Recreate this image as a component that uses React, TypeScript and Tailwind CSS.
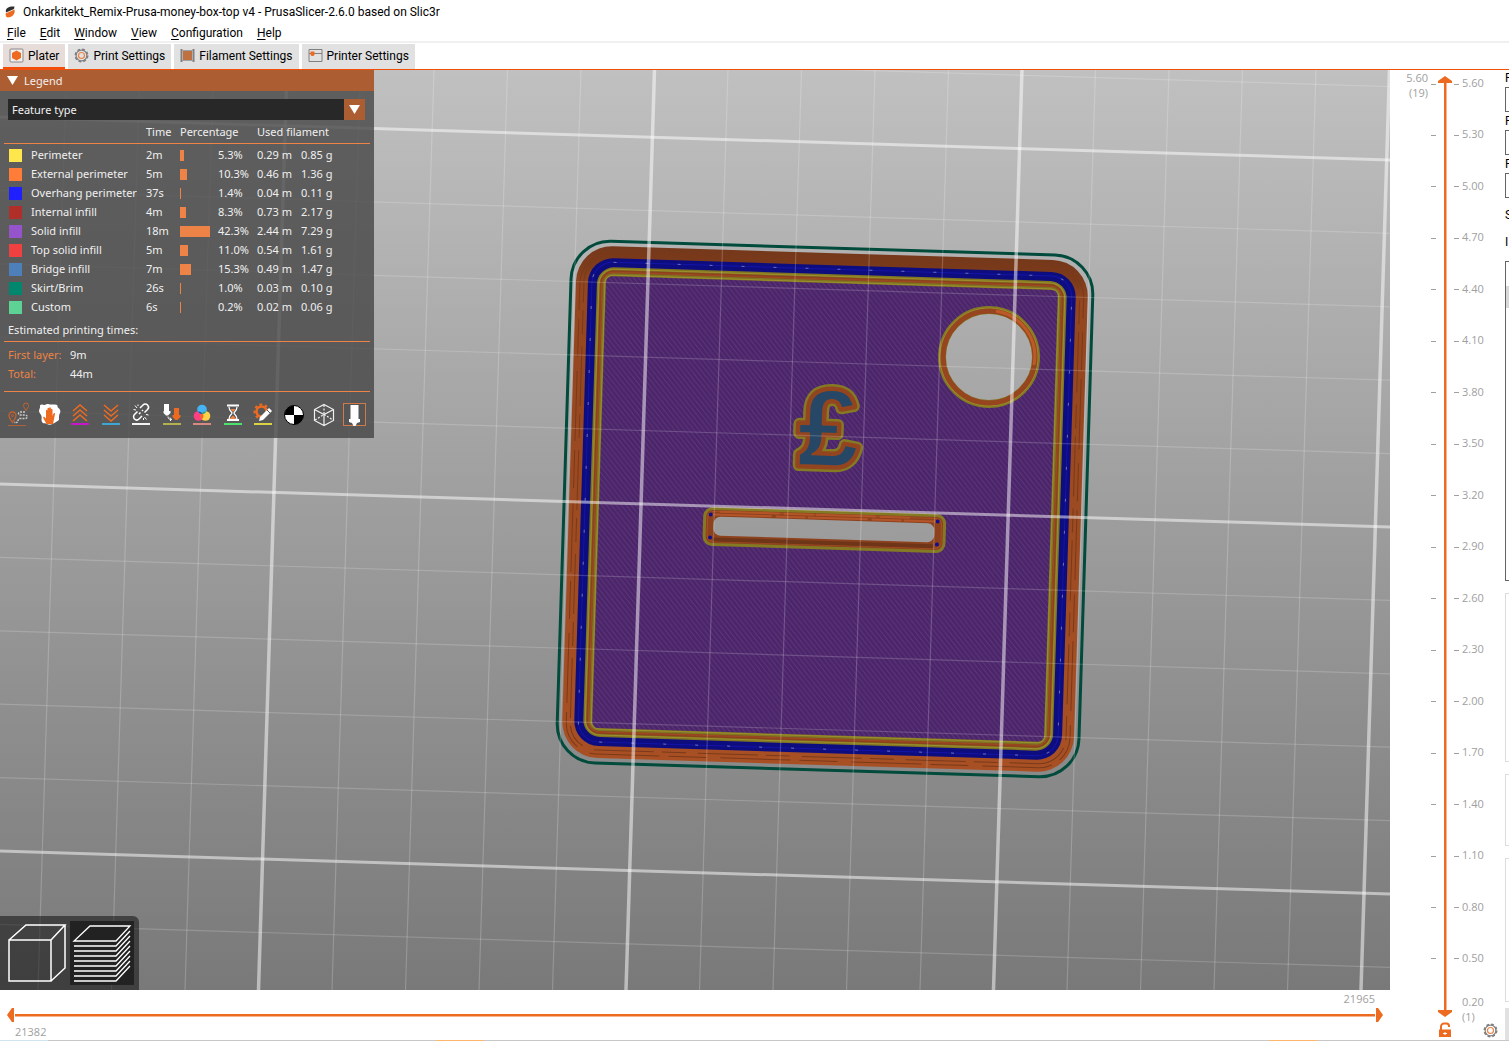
import type { ReactNode } from "react";
import clsx from "clsx";

const MENUS = ["File", "Edit", "Window", "View", "Configuration", "Help"];

const FEATURES = [
  { name: "Perimeter", swatch: "bg-[#ffe64d]", time: "2m", bar: 4, percent: "5.3%", length: "0.29 m", weight: "0.85 g" },
  { name: "External perimeter", swatch: "bg-[#ff7d38]", time: "5m", bar: 7, percent: "10.3%", length: "0.46 m", weight: "1.36 g" },
  { name: "Overhang perimeter", swatch: "bg-[#1f1fff]", time: "37s", bar: 1, percent: "1.4%", length: "0.04 m", weight: "0.11 g" },
  { name: "Internal infill", swatch: "bg-[#b03029]", time: "4m", bar: 6, percent: "8.3%", length: "0.73 m", weight: "2.17 g" },
  { name: "Solid infill", swatch: "bg-[#9654cc]", time: "18m", bar: 30, percent: "42.3%", length: "2.44 m", weight: "7.29 g" },
  { name: "Top solid infill", swatch: "bg-[#f04040]", time: "5m", bar: 8, percent: "11.0%", length: "0.54 m", weight: "1.61 g" },
  { name: "Bridge infill", swatch: "bg-[#4d80ba]", time: "7m", bar: 11, percent: "15.3%", length: "0.49 m", weight: "1.47 g" },
  { name: "Skirt/Brim", swatch: "bg-[#00876e]", time: "26s", bar: 1, percent: "1.0%", length: "0.03 m", weight: "0.10 g" },
  { name: "Custom", swatch: "bg-[#5ed194]", time: "6s", bar: 1, percent: "0.2%", length: "0.02 m", weight: "0.06 g" },
];

const HEIGHTS = [
  "5.60", "5.30", "5.00", "4.70", "4.40", "4.10", "3.80", "3.50", "3.20",
  "2.90", "2.60", "2.30", "2.00", "1.70", "1.40", "1.10", "0.80", "0.50",
];

export default function App() {
  return (
    <div className="flex h-screen flex-col overflow-hidden bg-white font-[Roboto,sans-serif] text-xs text-black">
      <TitleBar />
      <MenuBar />
      <Tabs />
      <div className="flex min-h-0 flex-1">
        <main className="flex min-w-0 flex-1 flex-col">
          <Viewport />
          <MoveSlider />
        </main>
        <LayerSlider />
        <Sidebar />
      </div>
      <div className="flex h-px shrink-0 bg-[#c8c8c8]">
        <div className="w-12 bg-[#cfe6f2]" />
        <div className="ml-[388px] w-12 bg-[#ffb56b]" />
        <div className="mr-48 ml-auto w-12 bg-[#ffb56b]" />
      </div>
    </div>
  );
}

function TitleBar() {
  return (
    <header className="flex h-[23px] shrink-0 items-center gap-[7px] pl-1">
      <svg viewBox="0 0 12 14" className="h-[14px] w-3">
        <path d="M2 7.500C1 3.500 4 1 10.500 1.500L10 4Z" fill="#2e2e2e" />
        <path d="M1.500 8.500 10.500 4.500C11.500 8 9 12.500 3.500 12.500L2 11.500Z" fill="#ed6b21" />
      </svg>
      <h1 className="whitespace-nowrap">
        Onkarkitekt_Remix-Prusa-money-box-top v4 - PrusaSlicer-2.6.0 based on Slic3r
      </h1>
    </header>
  );
}

function MenuBar() {
  return (
    <nav className="flex h-5 shrink-0 items-center gap-[14px] border-b-2 border-[#f0f0f0] pt-[2px] pl-[7px]">
      {MENUS.map((menu) => (
        <button key={menu} type="button" className="leading-4">
          <span className="underline underline-offset-2">{menu[0]}</span>
          {menu.slice(1)}
        </button>
      ))}
    </nav>
  );
}

function Tabs() {
  return (
    <div className="flex h-[27px] shrink-0 items-end gap-[3px] border-b border-[#f2500a] pl-[3px]" role="tablist">
      <Tab label="Plater" isActive>
        <rect x="1" y="1" width="13" height="13" rx="1" fill="#f3efec" stroke="#8a8a8a" />
        <path d="m7.500 2.500 4.500 2.500v5l-4.500 2.500-4.500-2.500v-5Z" fill="#ed6b21" />
      </Tab>
      <Tab label="Print Settings">
        <GearShape />
      </Tab>
      <Tab label="Filament Settings">
        <path d="M3 3h9v9H3z" fill="#c07142" />
        <path d="M1.500 1v13M13.500 1v13" stroke="#808080" strokeWidth="2" />
        <path d="M2 2.500h11M2 12.500h11" stroke="#a0a0a0" />
      </Tab>
      <Tab label="Printer Settings">
        <path d="M1 1.500h13v12H1zM1 5.500h13" fill="none" stroke="#808080" />
        <path d="M2.500 3.500h4v3l-1 1.500h-2l-1-1.500Z" fill="#ed6b21" />
      </Tab>
    </div>
  );
}

function Tab({
  label,
  children,
  isActive = false,
}: {
  label: string;
  children: ReactNode;
  isActive?: boolean;
}) {
  return (
    <button
      type="button"
      role="tab"
      aria-selected={isActive}
      className={clsx(
        "flex h-[25px] items-center gap-1 px-[6px] whitespace-nowrap",
        isActive ? "border-b-2 border-[#f2500a] bg-[#e6dcd9]" : "bg-[#e1e1e1] pb-[2px]",
      )}
    >
      <svg viewBox="0 0 15 15" className="size-[15px]">
        {children}
      </svg>
      {label}
    </button>
  );
}

function GearShape() {
  return (
    <g fill="none">
      <circle cx="7.500" cy="7.500" r="6" stroke="#808080" strokeWidth="2" strokeDasharray="2.700 2" />
      <circle cx="7.500" cy="7.500" r="5.400" stroke="#808080" strokeWidth="1.200" />
      <circle cx="7.500" cy="7.500" r="3" stroke="#ed8346" strokeWidth="1.200" />
    </g>
  );
}

function Viewport() {
  return (
    <section className="relative min-h-0 flex-1 overflow-hidden bg-[#999999]">
      <Scene />
      <Legend />
      <ViewToolbar />
    </section>
  );
}

function Scene() {
  const lines = Array.from({ length: 24 }, (_, i) => i - 4);

  return (
    <svg
      viewBox="0 70 1390 920"
      preserveAspectRatio="xMidYMid slice"
      className="absolute inset-0 h-full w-full"
    >
      <defs>
        <linearGradient id="bed" gradientUnits="userSpaceOnUse" x1="0" y1="70" x2="0" y2="990">
          <stop offset="0" stopColor="#c0c0c0" />
          <stop offset="1" stopColor="#797979" />
        </linearGradient>
        <linearGradient id="wall" gradientUnits="userSpaceOnUse" x1="0" y1="253" x2="0" y2="765">
          <stop offset="0" stopColor="#75381a" />
          <stop offset="0.040" stopColor="#7d3c1c" />
          <stop offset="0.080" stopColor="#93461f" />
          <stop offset="1" stopColor="#a85024" />
        </linearGradient>
        <pattern id="infill" width="5" height="6" patternUnits="userSpaceOnUse">
          <path d="M0 0h5v6H0z" fill="#4b2667" />
          <path d="m-1-1.200 7 8.400M-1 4.800l2 2.400M4-1.200l2 2.400" stroke="#62378a" strokeWidth="1" />
        </pattern>
      </defs>
      <rect y="70" width="1390" height="920" fill="url(#bed)" />

      <g transform="rotate(1.780 825 509)">
        <rect x="564" y="248" width="522" height="522" rx="39" fill="none" stroke="#004b3b" strokeWidth="3" />
        <path
          d="M605 253h440a36 36 0 0 1 36 36v440a36 36 0 0 1-36 36H605a36 36 0 0 1-36-36V289a36 36 0 0 1 36-36Z"
          fill="url(#wall)"
        />
        <g fill="none" stroke="#7a3a1a">
          <rect x="573" y="260" width="504" height="501" rx="31" strokeDasharray="38 9 70 14" />
          <rect x="577" y="262" width="496" height="495" rx="27" strokeDasharray="60 12 24 8" />
        </g>
        <rect x="581" y="265" width="488" height="488" rx="25" fill="#0d0d80" />
        <rect x="585" y="269" width="480" height="480" rx="21" fill="none" stroke="#1515a8" />
        <rect x="585" y="269" width="480" height="480" rx="21" fill="none" stroke="#7070a8" strokeDasharray="3 29" />
        <rect x="590" y="274" width="470" height="470" rx="17" fill="#807522" />
        <rect x="592" y="276" width="466" height="466" rx="15" fill="none" stroke="#9c902c" />
        <rect x="593" y="277" width="464" height="464" rx="14" fill="#8d421e" />
        <rect x="595" y="279" width="460" height="460" rx="12" fill="none" stroke="#a04b23" />
        <rect x="596" y="280" width="458" height="458" rx="10" fill="#807522" />
        <rect x="598" y="282" width="454" height="454" rx="8" fill="none" stroke="#9c902c" />
        <rect x="599" y="283" width="452" height="452" rx="6" fill="url(#infill)" />

        <rect x="705" y="512" width="240" height="36" rx="8" fill="#8d421e" stroke="#857a24" strokeWidth="3" />
        <rect x="708" y="515" width="234" height="30" rx="6" fill="none" stroke="#a64f24" />
        <path d="M712 518h224M720 515h190" stroke="#b35528" strokeWidth="2" strokeDasharray="60 4 30 2" />
        <path d="M714 543h220" stroke="#6f3519" strokeWidth="4" />
        <g fill="#10108a">
          <circle cx="711" cy="518" r="2" />
          <circle cx="711" cy="541" r="2" />
          <circle cx="938" cy="518" r="2" />
          <circle cx="938" cy="541" r="2" />
        </g>
        <rect x="714" y="520" width="221" height="19" rx="7" fill="url(#bed)" />

        <g
          fontFamily="Liberation Sans"
          fontSize="109"
          fontWeight="700"
          textAnchor="middle"
          strokeLinejoin="round"
        >
          <text x="826" y="466" fill="#857a24" stroke="#857a24" strokeWidth="12" aria-hidden="true">£</text>
          <text x="826" y="466" fill="#93451f" stroke="#93451f" strokeWidth="7" aria-hidden="true">£</text>
          <text x="826" y="466" fill="#274766" stroke="#93451f" strokeWidth="2">£</text>
        </g>
      </g>

      <circle cx="989" cy="357" r="47" fill="url(#bed)" stroke="#857a24" strokeWidth="8" />
      <circle cx="989" cy="357" r="49" fill="none" stroke="#9c902c" />
      <circle cx="989" cy="357" r="46" fill="none" stroke="#96451f" strokeWidth="5" />
      <path d="M996 311a46 46 0 0 1 38 54" fill="none" stroke="#bc5a2a" strokeWidth="3" />

      <g stroke="#ffffff">
        {lines.map((i) => (
          <line
            key={`v${i}`}
            x1={287 + i * 73.5}
            y1="70"
            x2={258.5 + i * 73.5}
            y2="990"
            strokeOpacity={i % 5 === 0 ? 0.5 : 0.2}
            strokeWidth={i % 5 === 0 ? 3.5 : 1.2}
          />
        ))}
        {lines.map((i) => (
          <line
            key={`h${i}`}
            x1="0"
            y1={117 + i * 73.4}
            x2="1390"
            y2={160 + i * 73.4}
            strokeOpacity={i % 5 === 0 ? 0.5 : 0.18}
            strokeWidth={i % 5 === 0 ? 3 : 1.2}
          />
        ))}
      </g>
    </svg>
  );
}

function Legend() {
  return (
    <div className="absolute top-0 left-0 w-[374px] bg-[#414141]/77 pb-2 font-['Noto_Sans',sans-serif] text-[11px] leading-4 text-[#f0f0f0]">
      <div className="flex h-[21px] items-center gap-[6px] bg-[#ad5d32] pl-[7px]">
        <TriangleDown />
        <h2>Legend</h2>
      </div>
      <div className="mt-2 mr-[9px] ml-2 grid h-[21px] grid-cols-[1fr_21px]">
        <select
          aria-label="Color by"
          className="col-span-2 col-start-1 row-start-1 appearance-none bg-[#282828] px-1 outline-none"
        >
          <option>Feature type</option>
        </select>
        <span className="pointer-events-none col-start-2 row-start-1 flex items-center justify-center bg-[#ad5d32]">
          <TriangleDown />
        </span>
      </div>
      <table className="mx-1 w-[366px] table-fixed border-collapse text-left">
        <colgroup>
          <col className="w-[27px]" />
          <col className="w-[115px]" />
          <col className="w-[34px]" />
          <col className="w-[38px]" />
          <col className="w-[39px]" />
          <col className="w-11" />
          <col />
        </colgroup>
        <thead>
          <tr className="h-[23px] border-b border-[#ed8346]">
            <th colSpan={2} aria-label="Feature" />
            <th className="pt-px font-normal">Time</th>
            <th colSpan={2} className="pt-px font-normal">Percentage</th>
            <th colSpan={2} className="pt-px font-normal">Used filament</th>
          </tr>
        </thead>
        <tbody className="whitespace-nowrap before:block before:h-[2px]">
          {FEATURES.map((feature) => (
            <tr key={feature.name} className="h-[19px]">
              <td className="pl-[5px]">
                <div className={clsx("size-[13px]", feature.swatch)} />
              </td>
              <td>{feature.name}</td>
              <td>{feature.time}</td>
              <td>
                <div className="h-[11px] bg-[#ed8346]" style={{ width: feature.bar }} />
              </td>
              <td>{feature.percent}</td>
              <td>{feature.length}</td>
              <td>{feature.weight}</td>
            </tr>
          ))}
        </tbody>
      </table>
      <p className="mx-1 mt-[5px] border-b border-[#ed8346] pb-[3px] pl-1">Estimated printing times:</p>
      <dl className="mx-1 grid grid-cols-[62px_1fr] gap-y-[3px] border-b border-[#ed8346] pt-[5px] pb-[9px] pl-1">
        <dt className="text-[#ed8346]">First layer:</dt>
        <dd>9m</dd>
        <dt className="text-[#ed8346]">Total:</dt>
        <dd>44m</dd>
      </dl>
      <LegendTools />
    </div>
  );
}

function TriangleDown() {
  return (
    <svg viewBox="0 0 11 9" className="h-[9px] w-[11px]">
      <path d="M0 0h11L5.500 9Z" fill="#ffffff" />
    </svg>
  );
}

function LegendTools() {
  return (
    <div className="mx-1 mt-2 flex justify-between">
      <Tool label="Travel">
        <g fill="none" stroke="#c4622f">
          <path d="M8.500 22.500C6.500 19 5 18 5 15.500a3.500 3.500 0 0 1 7 0c0 2.500-1.500 3.500-3.500 7Z" strokeWidth="1.300" />
          <circle cx="8.500" cy="15.500" r="1" />
          <path d="M22 10.500c-1.500-2.500-2.500-3.500-2.500-5a2.500 2.500 0 0 1 5 0c0 1.500-1 2.500-2.500 5Z" />
          <path d="M4 25.500h18" strokeWidth="0.800" />
        </g>
        <path
          d="M21 12h-5c-2 0-2 3 0 3h5c3 0 3 3.500 0 3.500h-5c-3 0-1 4-4 4h-2"
          fill="none"
          stroke="#c9c9c9"
          strokeWidth="1.500"
          strokeDasharray="2 1"
        />
      </Tool>
      <Tool label="Wipe">
        <path d="M5 5.500c1-1.500 3-1 4-.5s2-1.500 4-1 2 .5 4 .5 4-.5 5 .5 0 2 1.500 3S26 11 25 13s-1 3-1 5 0 2-1.500 3-3 2-5 3-4 1-5.500 0S8 24 7 22s0-4-.5-6S4 13 4 11s1.500-3 1-5.500Z" fill="#ffffff" />
        <path
          d="M11.500 24 8 17.500l1-1 2 2V10.500c0-1 1.500-1 1.500 0V15V8.500c0-1 1.700-1 1.700 0V15V8c0-1 1.700-1 1.700 0v7V9.500c0-1 1.600-1 1.600 0V16l1-2.500c.5-1 1.800-.5 1.500.5l-2 10Z"
          fill="#ed6b21"
        />
      </Tool>
      <Tool label="Retractions" line="#c817c8">
        <path d="m8 11 7-6 7 6M8 16l7-6 7 6M8 21l7-6 7 6" fill="none" stroke="#ed6b21" strokeWidth="1.500" />
      </Tool>
      <Tool label="Deretractions" line="#3ea6d0">
        <path d="m8 5 7 6 7-6M8 10l7 6 7-6M8 15l7 6 7-6" fill="none" stroke="#ed6b21" strokeWidth="1.500" />
      </Tool>
      <Tool label="Seams" line="#f2f2f2">
        <g fill="none" stroke="#ffffff" strokeWidth="1.500">
          <path d="m14 8 3-3a3 3 0 0 1 4.500 4.500l-3 3M16 16l-3 3a3 3 0 0 1-4.500-4.500l3-3M13 14l1.500-1.500M16 11l1-1" />
          <path d="M9 5.500 11 8M7.500 9.500l2.500.5M20 14.500l2.500.5M18.500 17l2 2.500M12 4.500V6M17.500 18v2" strokeWidth="1" />
        </g>
      </Tool>
      <Tool label="Tool changes" line="#b5b04f">
        <path d="M7 4h5v7h1.500v2L11 15.500H9L6.500 13v-2H7Z" fill="#ffffff" />
        <path d="M17 8h5v7h1.500v2L20.500 20h-2L15.500 17v-2H17Z" fill="#ed6b21" />
        <path d="M11 16.500c0 2 1 3 3.500 3l-1.500-2m1.500 2-1.500 1.500" fill="none" stroke="#ffffff" />
      </Tool>
      <Tool label="Color changes" line="#d98a80">
        <circle cx="11.500" cy="16" r="4.800" fill="#ff3f80" />
        <circle cx="18.500" cy="16" r="4.800" fill="#ffcf48" />
        <circle cx="15" cy="9.500" r="4.800" fill="#45b4f5" />
        <path d="M15 12.700a4.800 4.800 0 0 1 0 6.600 4.800 4.800 0 0 1 0-6.600Z" fill="#ed6b21" />
        <path d="M11 11.500a4.800 4.800 0 0 1 4 1.500l-.5 1A4.800 4.800 0 0 1 11 11.500Z" fill="#343c8c" />
        <path d="M19 11.500a4.800 4.800 0 0 0-4 1.500l.5 1A4.800 4.800 0 0 0 19 11.500Z" fill="#3c9c50" />
      </Tool>
      <Tool label="Print pauses" line="#4be36e">
        <path d="M9 5.500h12M9 20h12" stroke="#ffffff" strokeWidth="2" />
        <path d="M11 7c0 4 3 4.500 3 6s-3 2-3 6h8c0-4-3-4.500-3-6s3-2 3-6" fill="none" stroke="#ffffff" strokeWidth="1.200" />
        <path d="M12.500 9h5L15 12ZM12 19c.5-2 2-2.500 3-3.500 1 1 2.500 1.500 3 3.500Z" fill="#ed8346" />
      </Tool>
      <Tool label="Custom G-codes" line="#d9d443">
        <circle cx="13.500" cy="11.500" r="5" fill="none" stroke="#ed6b21" strokeWidth="2.600" strokeDasharray="24 8" transform="rotate(90 13.500 11.500)" />
        <circle cx="13.500" cy="11.500" r="7" fill="none" stroke="#ed6b21" strokeWidth="2" strokeDasharray="2.700 2.700 2.700 2.700 2.700 2.700 2.700 2.700 2.700 20" transform="rotate(120 13.500 11.500)" />
        <path d="m11 21 1-4 9-9 3 3-9 9Z" fill="#ffffff" />
        <path d="m19 10 3 3" stroke="#555555" />
      </Tool>
      <Tool label="Center of gravity">
        <circle cx="15" cy="15" r="9.500" fill="#ffffff" />
        <path d="M15 15V5.500A9.500 9.500 0 0 0 5.500 15ZM15 15v9.500a9.500 9.500 0 0 0 9.500-9.500Z" fill="#000000" />
        <circle cx="15" cy="15" r="9.500" fill="none" stroke="#000000" />
      </Tool>
      <Tool label="Shells">
        <g fill="none" stroke="#f0f0f0" strokeWidth="1.200">
          <path d="m15 4.500 9.500 5v11L15 25.500l-9.500-5v-11ZM5.500 9.500l9.500 5 9.500-5M15 14.500v11" />
          <path d="M15 5v9M6 20l9-5.500 9 5.500" strokeDasharray="2 1.500" />
        </g>
      </Tool>
      <Tool label="Tool marker" isActive>
        <path d="M10.500 5h8v14H20v3l-3 1-1.500 3h-2L12 23l-3-1v-3h1.500Z" fill="#ffffff" />
      </Tool>
    </div>
  );
}

function Tool({
  label,
  line,
  children,
  isActive = false,
}: {
  label: string;
  line?: string;
  children: ReactNode;
  isActive?: boolean;
}) {
  return (
    <button type="button" aria-label={label} aria-pressed={isActive}>
      <svg viewBox="0 0 30 30" className="size-[30px]">
        {isActive && <rect x="3.500" y="3.500" width="22" height="22" fill="#555555" stroke="#d07a48" />}
        {children}
        {line && <path d="M6 24h18" stroke={line} strokeWidth="2" />}
      </svg>
    </button>
  );
}

function ViewToolbar() {
  return (
    <div className="absolute bottom-0 left-0 flex gap-[2px] rounded-tr-md bg-black/48 py-[5px] pr-[5px] pl-1">
      <button type="button" aria-label="3D editor view" className="size-16">
        <svg viewBox="0 0 64 64" className="size-16" fill="none" stroke="#ffffff" strokeWidth="1.500">
          <path d="M5 19h42v41H5ZM5 19 22 4h39L47 19M61 4v43L47 60" />
        </svg>
      </button>
      <button type="button" aria-label="Preview" aria-pressed="true" className="size-16 bg-[#222222]">
        <svg viewBox="0 0 64 64" className="size-16" fill="none" stroke="#ffffff" strokeWidth="1.300">
          <path d="M4 20h42L60 5H20Z" />
          {Array.from({ length: 8 }, (_, i) => (
            <path key={i} d={`M4 ${25 + i * 5}h42l14-15`} />
          ))}
        </svg>
      </button>
    </div>
  );
}

const THUMB =
  "pointer-events-none appearance-none bg-transparent outline-none [&::-webkit-slider-thumb]:pointer-events-auto [&::-webkit-slider-thumb]:appearance-none [&::-webkit-slider-thumb]:bg-[#ed6b21]";

const H_THUMB =
  "col-start-1 row-start-1 h-[14px] w-full [&::-webkit-slider-thumb]:h-[14px] [&::-webkit-slider-thumb]:w-[7px]";

const V_THUMB =
  "col-start-1 row-start-1 h-full w-[14px] justify-self-center [direction:rtl] [writing-mode:vertical-lr] [&::-webkit-slider-thumb]:h-[7px] [&::-webkit-slider-thumb]:w-[14px]";

function MoveSlider() {
  return (
    <div className="flex h-[50px] shrink-0 flex-col px-[7px] font-['Open_Sans',sans-serif] text-[11px] leading-[17px] text-[#a0a0a0]">
      <output className="self-end pr-2">21965</output>
      <div className="grid h-4 items-center">
        <div className="col-start-1 row-start-1 mx-2 h-[3px] border-b border-[#f9b48f] bg-[#ed6b21]" />
        <input
          type="range"
          aria-label="First move"
          min={21382}
          max={21965}
          defaultValue={21382}
          className={clsx(THUMB, H_THUMB, "[&::-webkit-slider-thumb]:[clip-path:polygon(0_50%,70%_0,100%_0,100%_100%,70%_100%)]")}
        />
        <input
          type="range"
          aria-label="Last move"
          min={21382}
          max={21965}
          defaultValue={21965}
          className={clsx(THUMB, H_THUMB, "[&::-webkit-slider-thumb]:[clip-path:polygon(100%_50%,30%_0,0_0,0_100%,30%_100%)]")}
        />
      </div>
      <output className="pl-2">21382</output>
    </div>
  );
}

function LayerSlider() {
  return (
    <div className="flex w-[115px] shrink-0 flex-col font-['Open_Sans',sans-serif] text-[11px] leading-4 text-[#a0a0a0]">
      <div className="grid min-h-0 flex-1 grid-cols-[38px_28px_1fr]">
        <output className="text-right leading-[15px]">
          5.60
          <br />
          (19)
        </output>
        <div className="col-start-2 row-start-1 ml-[3px] grid w-7 pt-[6px] pb-[3px]">
          <div className="col-start-1 row-start-1 my-[6px] w-[3px] justify-self-center border-r border-[#f9b48f] bg-[#ed6b21]" />
          <input
            type="range"
            aria-label="Top layer"
            min={1}
            max={19}
            defaultValue={19}
            className={clsx(THUMB, V_THUMB, "[&::-webkit-slider-thumb]:[clip-path:polygon(50%_0,100%_70%,100%_100%,0_100%,0_70%)]")}
          />
          <input
            type="range"
            aria-label="Bottom layer"
            min={1}
            max={19}
            defaultValue={1}
            className={clsx(THUMB, V_THUMB, "[&::-webkit-slider-thumb]:[clip-path:polygon(50%_100%,100%_30%,100%_0,0_0,0_30%)]")}
          />
        </div>
        <div className="col-span-2 col-start-2 row-start-1 -mb-1 flex flex-col justify-between pt-[5px] pl-[3px]">
          <div className="flex flex-1 flex-col justify-between">
            {HEIGHTS.map((height) => (
              <div key={height} className="flex h-4 items-center">
                <span className="mt-[2px] mr-[18px] h-px w-[5px] bg-[#a0a0a0]" />
                <span className="mt-[2px] mr-[3px] h-px w-[5px] bg-[#a0a0a0]" />
                {height}
              </div>
            ))}
          </div>
          <output className="mt-7 pl-[31px] leading-[15px]">
            0.20
            <br />
            (1)
          </output>
        </div>
      </div>
      <div className="flex h-5 shrink-0 items-center justify-between pr-[7px] pl-12">
        <button type="button" aria-label="Unlock layer range">
          <svg viewBox="0 0 14 16" className="h-4 w-[14px]">
            <path d="M3 8V4.500a3 3 0 0 1 3-3h2.500a2.500 2.500 0 0 1 2.500 2.500v1" fill="none" stroke="#ed6b21" strokeWidth="2" />
            <path d="M1 7.500h12V15H1Z" fill="#ed6b21" />
            <path d="M5 11.500h4M7 10v3" stroke="#ffffff" />
          </svg>
        </button>
        <button type="button" aria-label="Slider settings">
          <svg viewBox="0 0 15 15" className="size-[15px]">
            <GearShape />
          </svg>
        </button>
      </div>
    </div>
  );
}

function Sidebar() {
  return (
    <aside className="flex w-1 shrink-0 flex-col overflow-hidden">
      <SidebarField label="P" name="Print settings" />
      <SidebarField label="F" name="Filament" />
      <SidebarField label="P" name="Printer" />
      <p className="mt-2 leading-4">S</p>
      <p className="mt-[11px] leading-4">I</p>
      <div className="mt-[11px] h-80 border border-r-0 border-[#646464] pt-6">
        <div className="h-[22px] bg-[#d9d9d9]" />
      </div>
      <div className="mt-3 h-[169px] border border-r-0 border-[#dcdcdc]" />
      <div className="mt-3 h-[72px] border border-r-0 border-[#dcdcdc]" />
      <div className="mt-3 flex-1 border border-r-0 border-[#dcdcdc]" />
      <button type="button" aria-label="Slice now" className="mt-[6px] h-8 shrink-0 bg-[#e1e1e1]" />
    </aside>
  );
}

function SidebarField({ label, name }: { label: string; name: string }) {
  return (
    <label className="flex h-[43px] flex-col justify-between pb-px leading-4">
      {label}
      <input aria-label={name} className="h-[25px] w-10 border border-[#646464]" />
    </label>
  );
}
